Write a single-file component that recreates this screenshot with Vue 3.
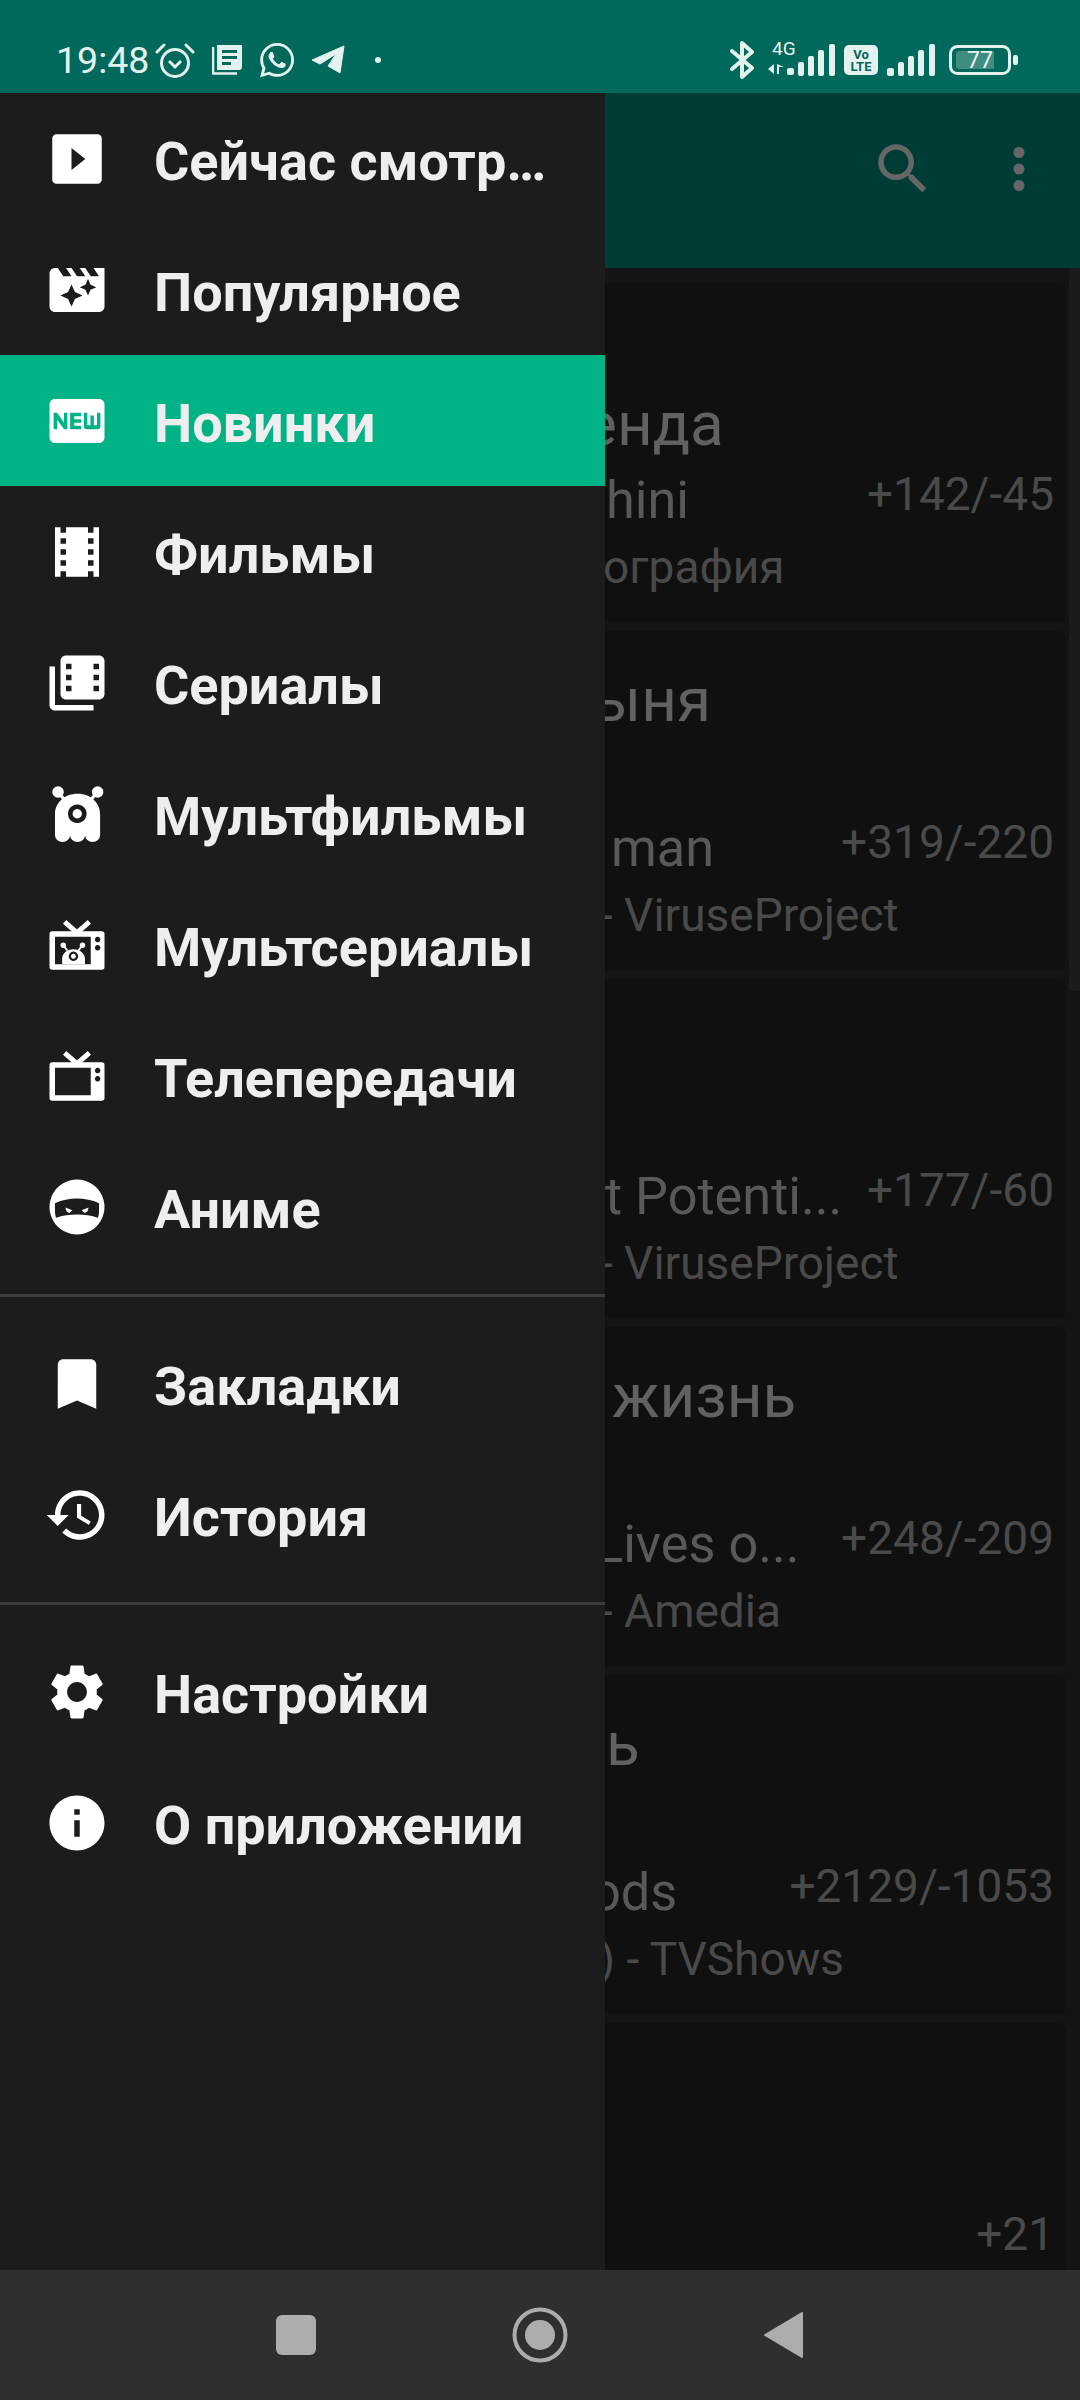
<script setup>
const group1 = [
  { label: 'Сейчас смотр…', icon: 'play' },
  { label: 'Популярное', icon: 'clap' },
  { label: 'Новинки', icon: 'new', active: true },
  { label: 'Фильмы', icon: 'film' },
  { label: 'Сериалы', icon: 'series' },
  { label: 'Мультфильмы', icon: 'monster' },
  { label: 'Мультсериалы', icon: 'tvmonster' },
  { label: 'Телепередачи', icon: 'tv' },
  { label: 'Аниме', icon: 'ninja' }
]
const group2 = [
  { label: 'Закладки', icon: 'bookmark' },
  { label: 'История', icon: 'history' }
]
const group3 = [
  { label: 'Настройки', icon: 'settings' },
  { label: 'О приложении', icon: 'info' }
]
const groups = [group1, group2, group3]

const cards = [
  { t1: '', t1x: 0, t2: 'енда', t2x: 584, sub: 'hini', subx: 606, src: 'ография', srcx: 603, count: '+142/-45' },
  { t1: 'ыня', t1x: 593, t2: '', t2x: 0, sub: 'man', subx: 611, src: '- ViruseProject', srcx: 600, count: '+319/-220' },
  { t1: '', t1x: 0, t2: '', t2x: 0, sub: 't Potenti...', subx: 605, src: '- ViruseProject', srcx: 600, count: '+177/-60' },
  { t1: 'жизнь', t1x: 612, t2: '', t2x: 0, sub: 'Lives o...', subx: 595, src: '- Amedia', srcx: 600, count: '+248/-209' },
  { t1: 'ь', t1x: 606, t2: '', t2x: 0, sub: 'ods', subx: 591, src: ') - TVShows', srcx: 599, count: '+2129/-1053' },
  { t1: '', t1x: 0, t2: '', t2x: 0, sub: '', subx: 0, src: '', srcx: 0, count: '+21' }
]
const pad = (x) => ({ paddingLeft: x + 'px' })
</script>

<template>
  <div class="phone">
    <div class="status">
      <div class="time">19:48</div>
      <svg class="s-alarm" width="40" height="36" viewBox="0 0 40 36">
        <circle cx="20" cy="21" r="13.5" fill="none" stroke="#e4f2ef" stroke-width="3" />
        <path d="M2 10 9 3M38 10 31 3" stroke="#e4f2ef" stroke-width="3" fill="none" stroke-linecap="round" />
        <path d="M14 19l6 6 6-6" stroke="#e4f2ef" stroke-width="3" fill="none" />
      </svg>
      <svg class="s-news" width="30" height="30" viewBox="0 0 30 30">
        <path d="M1 2V28.500H25" stroke="#e4f2ef" stroke-width="2.500" fill="none" />
        <path fill-rule="evenodd" fill="#e4f2ef" d="M5 0H30V22a3 3 0 0 1-3 3H5ZM10 5V8H25V5ZM10 11V14H25V11ZM10 17V20H19V17Z" />
      </svg>
      <svg class="s-wa" width="35" height="35" viewBox="2 2 20.500 20.500">
        <path fill="#e4f2ef" d="M12.040 2c-5.460 0-9.910 4.450-9.910 9.910 0 1.750.460 3.450 1.320 4.950L2.050 22l5.250-1.380c1.450.790 3.080 1.210 4.740 1.210 5.460 0 9.910-4.450 9.910-9.910 0-2.650-1.030-5.140-2.900-7.010A9.816 9.816 0 0 0 12.040 2m.010 1.670c2.200 0 4.260.860 5.820 2.420a8.225 8.225 0 0 1 2.410 5.830c0 4.540-3.700 8.230-8.240 8.230-1.480 0-2.930-.390-4.190-1.150l-.300-.170-3.120.820.830-3.040-.200-.320a8.188 8.188 0 0 1-1.260-4.380c.010-4.540 3.700-8.240 8.250-8.240M8.530 7.330c-.160 0-.430.060-.660.310-.220.250-.870.860-.870 2.070 0 1.220.890 2.390 1 2.560.140.170 1.760 2.670 4.250 3.730.590.270 1.050.420 1.410.530.590.190 1.130.160 1.560.100.480-.070 1.460-.600 1.670-1.180.210-.580.210-1.070.150-1.180-.070-.100-.230-.160-.480-.270-.250-.140-1.470-.740-1.690-.820-.230-.080-.370-.120-.560.120-.160.250-.640.810-.780.970-.150.170-.290.190-.530.070-.260-.130-1.060-.390-2-1.230-.740-.660-1.230-1.470-1.380-1.720-.120-.240-.010-.390.110-.500.110-.110.270-.290.370-.440.130-.140.170-.250.250-.410.080-.170.040-.310-.020-.430-.060-.110-.560-1.350-.770-1.840-.200-.480-.400-.420-.560-.430-.140 0-.300-.010-.470-.010z" />
      </svg>
      <svg class="s-tg" width="34" height="30" viewBox="0 0 34 30">
        <path fill="#e4f2ef" stroke="#e4f2ef" stroke-width="1" stroke-linejoin="round" d="M1 15 33 1 29 28 17 21 25 9 9 19Z" />
      </svg>
      <div class="s-dot"></div>

      <div class="s-spacer"></div>

      <svg class="s-bt" width="24" height="40" viewBox="0 0 24 40">
        <path d="M2 11 22 28 12 37V3L22 12 2 29" fill="none" stroke="#e4f2ef" stroke-width="4" stroke-linejoin="round" stroke-linecap="round" />
      </svg>
      <svg class="s-net" width="67" height="38" viewBox="0 0 67 38">
        <text x="4" y="14" class="net-text">4G</text>
        <path fill="#e4f2ef" d="M6 23v10L0 28ZM9 23v10h2v-7h5Z" />
        <rect x="19" y="27" width="7" height="7" rx="2" fill="#e4f2ef" />
        <rect x="30" y="21" width="6" height="14" rx="2" fill="#e4f2ef" />
        <rect x="40" y="15" width="6" height="20" rx="2" fill="#e4f2ef" />
        <rect x="50" y="9" width="6" height="26" rx="2" fill="#e4f2ef" />
        <rect x="61" y="3" width="6" height="32" rx="2" fill="#e4f2ef" />
      </svg>
      <svg class="s-volte" width="34" height="30" viewBox="0 0 34 30">
        <rect width="34" height="30" rx="5" fill="#e4f2ef" />
        <text x="17" y="14" class="vo-text">Vo</text>
        <text x="17" y="26" class="vo-text">LTE</text>
      </svg>
      <svg class="s-sig" width="48" height="32" viewBox="0 0 48 32">
        <rect x="0" y="24" width="7" height="8" rx="2" fill="#e4f2ef" />
        <rect x="11" y="18" width="6" height="14" rx="2" fill="#e4f2ef" />
        <rect x="21" y="12" width="6" height="20" rx="2" fill="#e4f2ef" />
        <rect x="31" y="6" width="6" height="26" rx="2" fill="#e4f2ef" />
        <rect x="42" y="0" width="6" height="32" rx="2" fill="#e4f2ef" />
      </svg>
      <svg class="s-bat" width="69" height="30" viewBox="0 0 69 30">
        <rect x="1.500" y="1.500" width="59" height="27" rx="7" fill="none" stroke="#e4f2ef" stroke-width="3" />
        <path d="M10 6H45V24H10a3 3 0 0 1-3-3V9a3 3 0 0 1 3-3Z" fill="#3f8c80" />
        <text x="31" y="23" class="bat-text">77</text>
        <rect x="64" y="10" width="5" height="10" rx="2" fill="#e4f2ef" />
      </svg>
    </div>

    <div class="main">
      <div class="toolbar">
        <svg class="tool" width="66" height="66" viewBox="0 0 24 24">
          <path fill="#666" d="M15.500 14h-.790l-.280-.270C15.410 12.590 16 11.110 16 9.500 16 5.910 13.090 3 9.500 3S3 5.910 3 9.500 5.910 16 9.500 16c1.610 0 3.090-.590 4.230-1.570l.270.280v.790l5 4.990L20.490 19l-4.990-5zm-6 0C7.010 14 5 11.990 5 9.500S7.010 5 9.500 5 14 7.010 14 9.500 11.990 14 9.500 14z" />
        </svg>
        <svg class="tool tool-more" width="66" height="66" viewBox="0 0 24 24">
          <circle cx="12" cy="6" r="2" fill="#666" />
          <circle cx="12" cy="12" r="2" fill="#666" />
          <circle cx="12" cy="18" r="2" fill="#666" />
        </svg>
      </div>

      <div class="list">
        <div v-for="(c, i) in cards" :key="i" class="card">
          <div class="title" :style="pad(c.t1x)">{{ c.t1 }}</div>
          <div class="title" :style="pad(c.t2x)">{{ c.t2 }}</div>
          <div class="row">
            <div class="sub" :style="pad(c.subx)">{{ c.sub }}</div>
            <div class="count">{{ c.count }}</div>
          </div>
          <div class="src" :style="pad(c.srcx)">{{ c.src }}</div>
        </div>
        <div class="scrollbar"></div>
      </div>

      <nav class="drawer">
        <template v-for="(g, gi) in groups" :key="gi">
          <div v-if="gi > 0" class="divider"></div>
          <div v-for="it in g" :key="it.label" class="item" :class="{ active: it.active }">
            <svg class="icon" width="66" height="66" viewBox="0 0 24 24" fill="#fff">
              <template v-if="it.icon === 'play'">
                <path fill-rule="evenodd" d="M4.500 3h15A1.500 1.500 0 0 1 21 4.500v15a1.500 1.500 0 0 1-1.500 1.500h-15A1.500 1.500 0 0 1 3 19.500v-15A1.500 1.500 0 0 1 4.500 3ZM10 8v8l5-4Z" />
              </template>
              <template v-else-if="it.icon === 'clap'">
                <path d="M18 4l2 3h-3l-2-3h-2l2 3h-3l-2-3H8l2 3H7L5 4H4c-1.100 0-1.990.900-1.990 2L2 18c0 1.100.900 2 2 2h16c1.100 0 2-.900 2-2V4h-4zm-6.750 11.250L10 18l-1.250-2.750L6 14l2.750-1.250L10 10l1.250 2.750L14 14l-2.750 1.250zm5.690-3.310L16 14l-.940-2.060L13 11l2.060-.940L16 8l.940 2.060L19 11l-2.060.940z" />
              </template>
              <template v-else-if="it.icon === 'new'">
                <path d="M20 4H4c-1.110 0-1.990.890-1.990 2L2 18c0 1.110.890 2 2 2h16c1.110 0 2-.890 2-2V6c0-1.110-.890-2-2-2zM8.500 15H7.300l-2.550-3.500V15H3.500V9h1.250l2.500 3.500V9H8.500v6zm5-4.740H11v1.120h2.500v1.260H11v1.110h2.500V15h-4V9h4v1.260zm7 3.740c0 .550-.450 1-1 1h-4c-.550 0-1-.450-1-1V9h1.250v4.510h1.130V9.990h1.250v3.510h1.120V9h1.250v5z" />
              </template>
              <template v-else-if="it.icon === 'film'">
                <path d="M18 3v2h-2V3H8v2H6V3H4v18h2v-2h2v2h8v-2h2v2h2V3h-2zM8 17H6v-2h2v2zm0-4H6v-2h2v2zm0-4H6V7h2v2zm10 8h-2v-2h2v2zm0-4h-2v-2h2v2zm0-4h-2V7h2v2z" />
              </template>
              <template v-else-if="it.icon === 'series'">
                <path fill-rule="evenodd" d="M4 6H2v14c0 1.100.900 2 2 2h14v-2H4V6ZM8 2h12c1.100 0 2 .900 2 2v12c0 1.100-.900 2-2 2H8c-1.100 0-2-.900-2-2V4c0-1.100.900-2 2-2ZM8 5v2h2V5ZM8 9v2h2V9ZM8 13v2h2v-2ZM18 5v2h2V5ZM18 9v2h2V9ZM18 13v2h2v-2Z" />
              </template>
              <template v-else-if="it.icon === 'monster'">
                <circle cx="5.100" cy="4" r="2.100" />
                <circle cx="19.500" cy="4" r="2.100" />
                <path d="M5 4 8.500 8M19.500 4 16 8" stroke="#fff" stroke-width="1.200" />
                <path fill-rule="evenodd" d="M4 12C4 7.700 7.600 4.600 12.200 4.600S20.400 7.700 20.400 12V19.700a2.730 2.500 0 0 1-5.460 0a2.730 2.500 0 0 1-5.460 0a2.730 2.500 0 0 1-5.480 0ZM12.100 8.500a3.400 3.400 0 1 0 .01 0ZM12.100 10.200a1.700 1.700 0 1 1-.01 0Z" />
              </template>
              <template v-else-if="it.icon === 'tvmonster'">
                <path fill-rule="evenodd" d="M3 7H21a1 1 0 0 1 1 1V20a1 1 0 0 1-1 1H3a1 1 0 0 1-1-1V8a1 1 0 0 1 1-1ZM4 9V19H17V9ZM19.500 9a1 1 0 1 0 .01 0ZM19.500 12a1 1 0 1 0 .01 0Z" />
                <path d="M7.500 3.600 12 7.500 16.500 3.600" fill="none" stroke="#fff" stroke-width="1.800" />
                <circle cx="7" cy="12.100" r="1" />
                <circle cx="14" cy="12.100" r="1" />
                <path d="M7 12.100 8.500 14M14 12.100 12.500 14" stroke="#fff" stroke-width=".7" />
                <path fill-rule="evenodd" d="M6.600 19V17C6.600 15 8.400 13.500 10.700 13.500S14.900 15 14.900 17V19ZM10.700 14.400a1.700 1.700 0 1 0 .01 0ZM10.700 15.200a.9.9 0 1 1-.01 0Z" />
              </template>
              <template v-else-if="it.icon === 'tv'">
                <path fill-rule="evenodd" d="M3 7H21a1 1 0 0 1 1 1V20a1 1 0 0 1-1 1H3a1 1 0 0 1-1-1V8a1 1 0 0 1 1-1ZM4 9V19H17V9ZM19.500 9a1 1 0 1 0 .01 0ZM19.500 12a1 1 0 1 0 .01 0Z" />
                <path d="M7.500 3.600 12 7.500 16.500 3.600" fill="none" stroke="#fff" stroke-width="1.800" />
              </template>
              <template v-else-if="it.icon === 'ninja'">
                <path fill-rule="evenodd" d="M12 2a10 10 0 1 1-.01 0ZM4 10.600V13.500C4 14.500 4.200 15.300 4.400 15.900 9 14.300 15 14.300 19.600 15.900 19.800 15.300 20 14.500 20 13.500V10.600C15 8.400 9 8.400 4 10.600Z" />
                <path d="M7.800 12.200 10.300 13.200 9.200 14.200C8.300 14 7.900 13.300 7.800 12.200ZM16.200 12.200 13.700 13.200 14.800 14.200C15.700 14 16.100 13.300 16.200 12.200Z" />
              </template>
              <template v-else-if="it.icon === 'bookmark'">
                <path d="M17 3H7c-1.100 0-1.990.900-1.990 2L5 21l7-3 7 3V5c0-1.100-.900-2-2-2z" />
              </template>
              <template v-else-if="it.icon === 'history'">
                <path d="M13 3c-4.970 0-9 4.030-9 9H1l3.890 3.890.070.140L9 12H6c0-3.870 3.130-7 7-7s7 3.130 7 7-3.130 7-7 7c-1.930 0-3.680-.790-4.940-2.060l-1.420 1.420C8.270 19.990 10.510 21 13 21c4.970 0 9-4.030 9-9s-4.030-9-9-9zm-1 5v5l4.280 2.540.720-1.210-3.500-2.080V8H12z" />
              </template>
              <template v-else-if="it.icon === 'settings'">
                <path d="M19.140,12.940c0.040-0.300,0.060-0.610,0.060-0.940c0-0.320-0.020-0.640-0.070-0.940l2.030-1.580c0.180-0.140,0.230-0.410,0.120-0.610 l-1.920-3.320c-0.120-0.220-0.370-0.290-0.590-0.220l-2.390,0.960c-0.500-0.380-1.030-0.700-1.620-0.940L14.400,2.810c-0.040-0.240-0.240-0.410-0.480-0.410 h-3.840c-0.240,0-0.430,0.170-0.470,0.410L9.250,5.350C8.660,5.590,8.120,5.920,7.630,6.290L5.240,5.330c-0.220-0.080-0.470,0-0.590,0.220L2.740,8.870 C2.620,9.080,2.660,9.340,2.860,9.480l2.030,1.580C4.840,11.360,4.800,11.690,4.800,12s0.020,0.640,0.070,0.940l-2.030,1.580 c-0.180,0.140-0.230,0.410-0.120,0.610l1.920,3.320c0.120,0.220,0.370,0.290,0.590,0.220l2.390-0.960c0.500,0.380,1.030,0.700,1.620,0.940l0.360,2.540 c0.050,0.240,0.240,0.410,0.480,0.410h3.840c0.240,0,0.440-0.170,0.470-0.410l0.360-2.540c0.590-0.240,1.130-0.560,1.620-0.940l2.390,0.960 c0.220,0.080,0.470,0,0.590-0.220l1.920-3.320c0.120-0.220,0.070-0.470-0.120-0.610L19.140,12.940z M12,15.600c-1.980,0-3.600-1.620-3.600-3.600 s1.620-3.600,3.600-3.600s3.600,1.620,3.600,3.600S13.980,15.600,12,15.600z" />
              </template>
              <template v-else>
                <path d="M12 2C6.480 2 2 6.480 2 12s4.480 10 10 10 10-4.480 10-10S17.520 2 12 2zm1 15h-2v-6h2v6zm0-8h-2V7h2v2z" />
              </template>
            </svg>
            <span class="label">{{ it.label }}</span>
          </div>
        </template>
      </nav>
    </div>

    <div class="navbar">
      <svg width="40" height="40" viewBox="0 0 40 40" class="nav-square">
        <rect width="40" height="40" rx="6" fill="#adadad" />
      </svg>
      <svg width="56" height="56" viewBox="0 0 56 56" class="nav-home">
        <circle cx="28" cy="28" r="25.500" fill="none" stroke="#adadad" stroke-width="4" />
        <circle cx="28" cy="28" r="15" fill="#adadad" />
      </svg>
      <svg width="41" height="48" viewBox="0 0 41 48" class="nav-back">
        <path d="M2 24 39 2V46Z" fill="#adadad" stroke="#adadad" stroke-width="2" stroke-linejoin="round" />
      </svg>
    </div>
  </div>
</template>

<style scoped>
.phone {
  width: 1080px;
  height: 2400px;
  display: flex;
  flex-direction: column;
  overflow: hidden;
  background: #141414;
  font-family: Roboto, "Noto Sans", sans-serif;
}
.status {
  height: 93px;
  box-sizing: border-box;
  padding: 27px 62px 0 56px;
  display: flex;
  align-items: center;
  background: #00695b;
  flex: none;
}
.time {
  width: 91px;
  color: #e4f2ef;
  font-size: 37.5px;
  line-height: 44px;
}
.s-alarm { margin-left: 8px; }
.s-news { margin-left: 17px; }
.s-wa { margin-left: 18px; }
.s-tg { margin-left: 16px; }
.s-dot {
  width: 6px;
  height: 6px;
  border-radius: 50%;
  background: #e4f2ef;
  margin-left: 30px;
}
.s-spacer { flex: 1; }
.s-net { margin-left: 14px; }
.s-volte { margin-left: 9px; }
.s-sig { margin-left: 9px; }
.s-bat { margin-left: 14px; }
.net-text {
  font-family: Roboto, sans-serif;
  font-size: 19px;
  fill: #e4f2ef;
}
.vo-text {
  font-family: Roboto, sans-serif;
  font-size: 13px;
  font-weight: 700;
  fill: #00695b;
  text-anchor: middle;
}
.bat-text {
  font-family: Roboto, sans-serif;
  font-size: 23px;
  fill: #e9f4f2;
  text-anchor: middle;
}
.main {
  position: relative;
  flex: 1;
  min-height: 0;
  display: flex;
  flex-direction: column;
}
.toolbar {
  height: 175px;
  flex: none;
  background: #003c36;
  box-sizing: border-box;
  padding: 43px 28px 0 0;
  display: flex;
  justify-content: flex-end;
  align-items: flex-start;
}
.tool-more { margin-left: 50px; }
.list {
  position: relative;
  flex: 1;
  min-height: 0;
  overflow: hidden;
  background: #141414;
  padding: 15px 14px 0 0;
  display: flex;
  flex-direction: column;
  gap: 9px;
}
.card {
  height: 339px;
  flex: none;
  box-sizing: border-box;
  padding: 33px 0 0;
  background: #101010;
  border-radius: 0 8px 8px 0;
}
.title {
  height: 72px;
  line-height: 72px;
  font-size: 62px;
  color: #616161;
  white-space: nowrap;
}
.row {
  height: 81px;
  display: flex;
  justify-content: space-between;
  padding-right: 12px;
}
.sub {
  line-height: 82px;
  font-size: 52.25px;
  color: #595959;
  white-space: nowrap;
}
.count {
  line-height: 68px;
  font-size: 46px;
  color: #4a4a4a;
  white-space: nowrap;
}
.src {
  line-height: 52px;
  font-size: 46px;
  color: #4a4a4a;
  white-space: nowrap;
}
.scrollbar {
  position: absolute;
  top: 0;
  right: 0;
  width: 11px;
  height: 723px;
  background: #1b1b1b;
}
.drawer {
  position: absolute;
  top: 0;
  left: 0;
  bottom: 0;
  width: 605px;
  background: #1c1c1c;
}
.item {
  height: 131px;
  display: flex;
  align-items: center;
  padding-left: 44px;
}
.item.active { background: #00b386; }
.icon { flex: none; }
.label {
  margin-left: 44px;
  padding-top: 5px;
  font-size: 54px;
  font-weight: 700;
  color: #eeeeee;
  white-space: nowrap;
}
.divider {
  height: 3px;
  margin: 22px 0 21px;
  background: #3c3c3c;
}
.navbar {
  height: 130px;
  flex: none;
  background: #2f2f2f;
  position: relative;
  display: flex;
  align-items: center;
  padding-left: 276px;
}
.nav-home { margin-left: 196px; }
.nav-back { margin-left: 195px; }
</style>

<style>
html, body { margin: 0; background: #141414; }
</style>
